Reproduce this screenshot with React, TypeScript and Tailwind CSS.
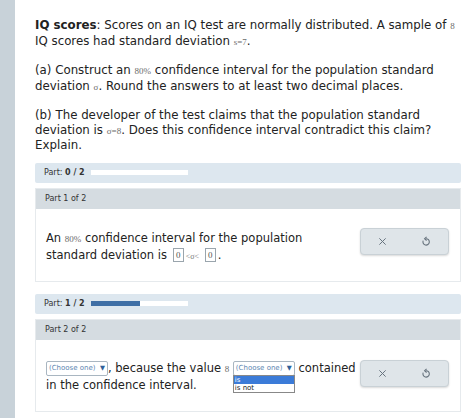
import React from "react";

const M = ({ children }: { children: React.ReactNode }) => (
  <span className="font-['Liberation_Serif',serif] text-[9px] text-[#6b6b6b]">{children}</span>
);

const Buttons = () => (
  <div className="flex h-[27px] w-[89px] shrink-0 items-center justify-around rounded-[4px] border border-[#c9d1d6] bg-[#dfe5e9] shadow-[0_1px_2px_rgba(0,0,0,0.15)]">
    <svg width="9" height="9" viewBox="0 0 10 10" className="text-[#66727d]">
      <path d="M1.5 1.5l7 7M8.5 1.5l-7 7" stroke="currentColor" strokeWidth="1.1" fill="none" />
    </svg>
    <svg width="10" height="11" viewBox="0 0 10 11" className="text-[#66727d]">
      <path d="M2.2 4.6a3.2 3.2 0 1 0 2.8-1.9" stroke="currentColor" strokeWidth="1.1" fill="none" />
      <path d="M5.6 0.8L3.6 2.7l2 1.8" stroke="currentColor" strokeWidth="1.1" fill="none" />
    </svg>
  </div>
);

const PartBar = ({ done }: { done: number }) => (
  <div className="flex h-[20px] items-center rounded-[2px] bg-[#dde7ef] pl-[9px] text-[8px] text-[#333]">
    <span className="w-[47px]">
      Part: <b>{done} / 2</b>
    </span>
    <div className="h-[5px] w-[97px] bg-white">
      <div className={done ? "h-full w-[49px] bg-[#3f6fa6]" : "h-full w-0"} />
    </div>
  </div>
);

const Select = () => (
  <span className="inline-flex h-[15px] w-[62px] items-center justify-between rounded-[2px] border border-[#a9b6c1] px-[2px] align-middle text-[7px] leading-none text-[#5c86b2]">
    (Choose one)
    <span className="text-[6.5px] text-[#2e5f9a]">▼</span>
  </span>
);

const Box = () => (
  <span className="mx-[2px] inline-flex h-[14px] w-[11px] items-center justify-center border border-[#9aa5ad] align-middle font-['Liberation_Serif',serif] text-[9px] leading-none text-[#555]">
    0
  </span>
);

export default function App() {
  return (
    <div className="flex min-h-[418px] w-[474px] bg-white font-['DejaVu_Sans',sans-serif] text-[#222]">
      <div className="w-[15px] shrink-0 bg-[#c8d2d9]" />
      <div className="min-w-0 flex-1 pl-[20px] pr-[13px] pt-[18px]">
        <div className="text-[11.8px] leading-[14.5px]">
          <p>
            <b>IQ scores</b>: Scores on an IQ test are normally distributed. A sample of <M>8</M>{" "}
            IQ scores had standard deviation <M>s=7</M>.
          </p>
          <p className="mt-[14px]">
            (a) Construct an <M>80%</M> confidence interval for the population standard deviation{" "}
            <M>σ</M>. Round the answers to at least two decimal places.
          </p>
          <p className="mt-[14px]">
            (b) The developer of the test claims that the population standard deviation is <M>σ=8</M>.
            Does this confidence interval contradict this claim? Explain.
          </p>
        </div>

        <div className="mt-[10px]">
          <PartBar done={0} />
          <div className="mt-[5px] border border-[#e6eaed]">
            <div className="flex h-[20px] items-center bg-[#d5dce1] pl-[9px] text-[8px] text-[#333]">Part 1 of 2</div>
            <div className="flex h-[72px] items-start justify-between pl-[10px] pr-[11px] pt-[19px]">
              <p className="whitespace-nowrap pt-[2px] text-[11.5px] leading-[16px]">
                An <M>80%</M> confidence interval for the population
                <br />
                standard deviation is <Box />
                <span className="font-['Liberation_Serif',serif] text-[8px] text-[#777]">&lt;σ&lt;</span> <Box />.
              </p>
              <Buttons />
            </div>
          </div>
        </div>

        <div className="mt-[12px]">
          <PartBar done={1} />
          <div className="mt-[5px] border border-[#e6eaed]">
            <div className="flex h-[20px] items-center bg-[#d5dce1] pl-[9px] text-[8px] text-[#333]">Part 2 of 2</div>
            <div className="flex h-[71px] items-start justify-between pl-[10px] pr-[11px] pt-[20px]">
              <p className="whitespace-nowrap text-[11.5px] leading-[16px]">
                <Select />, because the value <M>8</M>{" "}
                <span className="relative inline-block align-middle">
                  <Select />
                  <span className="absolute left-0 top-[15px] w-[62px] border border-[#888] bg-white text-[7px] leading-[8px]">
                    <span className="block bg-[#3b7bd8] pl-[1px] text-white">is</span>
                    <span className="block pl-[1px] text-[#222]">is not</span>
                  </span>
                </span>{" "}
                contained
                <br />
                in the confidence interval.
              </p>
              <Buttons />
            </div>
          </div>
        </div>
      </div>
    </div>
  );
}
